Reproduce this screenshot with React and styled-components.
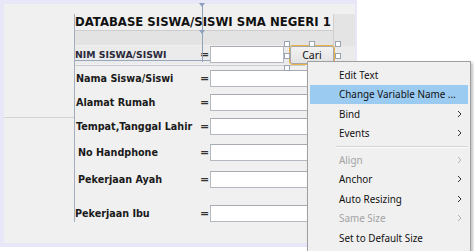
import React from 'react';
import styled, { createGlobalStyle } from 'styled-components';

const Global = createGlobalStyle`
  html, body {
    margin: 0;
    background: #ffffff;
    overflow: hidden;
  }
  body {
    width: 474px;
    height: 251px;
    position: relative;
  }
`;

const Canvas = styled.div`
  width: 357px;
  height: 247px;
  box-sizing: border-box;
  border: 4px solid #e7e7f8;
  border-right-width: 2px;
  background: #f0f0f0;
  display: grid;
  grid-template-columns: 70px 1fr;
`;

const LeftPane = styled.div`
  display: flex;
  flex-direction: column;
`;

const LeftTop = styled.div`
  height: 113px;
  border-bottom: 1px solid #d4d4d4;
`;

const Form = styled.div`
  margin-top: 10px;
  height: 208px;
  border-left: 1px solid #a4adbb;
  display: flex;
  flex-direction: column;
`;

const Title = styled.div`
  height: 16px;
  line-height: 16px;
  font-family: 'DejaVu Sans', sans-serif;
  font-weight: bold;
  font-size: 11.7px;
  color: #111;
  white-space: nowrap;
  display: flex;
`;

const TitleText = styled.span`
  flex: 0 0 258px;
`;

const SideBox = styled.div`
  flex: 1;
  background: #e4e4e4;
  border-left: 1px solid #cfcfcf;
  height: 48px;
`;

const HeaderBand = styled.div`
  height: 14px;
  width: 258px;
  background: #e3e3e3;
  border-top: 1px solid #cdcdcd;
`;

const Row = styled.div`
  height: 18px;
  margin-top: ${p => p.$gap}px;
  display: flex;
  align-items: center;
  background: ${p => (p.$active ? '#ebebeb' : 'transparent')};
`;

const Label = styled.div`
  width: 125px;
  box-sizing: border-box;
  padding-left: ${p => p.$indent || 0}px;
  font-family: 'DejaVu Sans Condensed', 'DejaVu Sans', sans-serif;
  font-weight: bold;
  font-size: 10.7px;
  color: #1a1a1a;
  white-space: nowrap;
`;

const SmallLabel = styled(Label)`
  font-family: 'DejaVu Sans', sans-serif;
  font-size: 9.3px;
  color: #2a2a3a;
`;

const Eq = styled.div`
  width: 10px;
  font-family: 'DejaVu Sans', sans-serif;
  font-weight: bold;
  font-size: 11px;
  color: #333;
`;

const Field = styled.div`
  width: ${p => p.$w}px;
  height: 17px;
  box-sizing: border-box;
  background: #ffffff;
  border: 1px solid #b4b8c0;
  border-top-color: #a8abb2;
`;

const CariButton = styled.div`
  margin-left: 6px;
  width: 44px;
  height: 18px;
  box-sizing: border-box;
  border: 1px solid #a9a9a9;
  border-radius: 2px;
  background: linear-gradient(#f2f2f2, #e3e3e3);
  outline: 1px solid #eab34a;
  font-family: 'Noto Sans', sans-serif;
  font-size: 10.5px;
  line-height: 16px;
  text-align: center;
  color: #111;
`;

const Handle = styled.div`
  position: absolute;
  left: ${p => p.$x - 2}px;
  top: ${p => p.$y - 2}px;
  width: 4px;
  height: 4px;
  background: #ffffff;
  border: 1px solid #9aa3b0;
`;

const GuideV = styled.div`
  position: absolute;
  left: 202px;
  top: 6px;
  width: 1px;
  height: 56px;
  background: #90a2ba;
`;

const GuideH = styled.div`
  position: absolute;
  left: 75px;
  top: ${p => p.$y}px;
  width: ${p => p.$w}px;
  height: 1px;
  background: ${p => p.$c};
`;

const Marker = styled.div`
  position: absolute;
  left: 199px;
  top: ${p => p.$y}px;
  width: 0;
  height: 0;
  border-left: 3px solid transparent;
  border-right: 3px solid transparent;
  border-top: 4px solid #8aa0bc;
`;

const Menu = styled.div`
  position: absolute;
  left: 307px;
  top: 61px;
  width: 164px;
  height: 200px;
  box-sizing: border-box;
  padding: 3px 2px;
  background: #f0f0f0;
  border: 1px solid #a0a0a0;
  box-shadow: 2px 2px 3px rgba(0, 0, 0, 0.25);
  font-family: 'Noto Sans', sans-serif;
  font-size: 9.9px;
`;

const Item = styled.div`
  height: 19.5px;
  display: flex;
  align-items: center;
  padding-left: 29px;
  padding-right: 6px;
  color: ${p => (p.$disabled ? '#a3a3a3' : '#111')};
  background: ${p => (p.$hover ? '#9bcbf1' : 'transparent')};
  white-space: nowrap;
`;

const ItemText = styled.span`
  flex: 1;
`;

const Separator = styled.div`
  height: 7px;
  display: flex;
  align-items: center;
  padding-left: 26px;

  &::after {
    content: '';
    flex: 1;
    height: 1px;
    background: #d6d6d6;
    border-bottom: 1px solid #fbfbfb;
  }
`;

const Chevron = ({ disabled }) => (
  <svg width="5" height="8" viewBox="0 0 5 8">
    <path d="M1 1 L4 4 L1 7" fill="none" stroke={disabled ? '#b0b0b0' : '#333'} strokeWidth="1" />
  </svg>
);

const rows = [
  { label: 'Nama Siswa/Siswi', gap: 6, indent: 1 },
  { label: 'Alamat Rumah', gap: 6, indent: 1 },
  { label: 'Tempat,Tanggal Lahir', gap: 6, indent: 1 },
  { label: 'No Handphone', gap: 8, indent: 3 },
  { label: 'Pekerjaan Ayah', gap: 9, indent: 3 },
  { label: 'Pekerjaan Ibu', gap: 16, indent: 0 },
];

const menu = [
  { text: 'Edit Text' },
  { text: 'Change Variable Name ...', hover: true },
  { text: 'Bind', sub: true },
  { text: 'Events', sub: true },
  { sep: true },
  { text: 'Align', sub: true, disabled: true },
  { text: 'Anchor', sub: true },
  { text: 'Auto Resizing', sub: true },
  { text: 'Same Size', sub: true, disabled: true },
  { text: 'Set to Default Size' },
];

const App = () => {
  return (
    <>
      <Global />
      <Canvas>
        <LeftPane>
          <LeftTop />
        </LeftPane>
        <Form>
          <Title>
            <TitleText>DATABASE SISWA/SISWI SMA NEGERI 1</TitleText>
            <SideBox />
          </Title>
          <HeaderBand />
          <Row $gap={1} $active>
            <SmallLabel>NIM SISWA/SISWI</SmallLabel>
            <Eq>=</Eq>
            <Field $w={74} />
            <CariButton>Cari</CariButton>
          </Row>
          {rows.map(r => (
            <Row key={r.label} $gap={r.gap}>
              <Label $indent={r.indent}>{r.label}</Label>
              <Eq>=</Eq>
              <Field $w={140} />
            </Row>
          ))}
        </Form>
      </Canvas>

      <GuideV />
      <Marker $y={3} />
      <Marker $y={30} />
      <GuideH $y={60} $w={135} $c="#95a6bd" />
      <GuideH $y={65} $w={230} $c="#c9ccd2" />

      <Handle $x={286} $y={43} />
      <Handle $x={311} $y={43} />
      <Handle $x={337} $y={43} />
      <Handle $x={286} $y={55} />
      <Handle $x={337} $y={55} />
      <Handle $x={286} $y={67} />

      <Menu>
        {menu.map((m, i) =>
          m.sep ? (
            <Separator key={i} />
          ) : (
            <Item key={i} $hover={m.hover} $disabled={m.disabled}>
              <ItemText>{m.text}</ItemText>
              {m.sub && <Chevron disabled={m.disabled} />}
            </Item>
          )
        )}
      </Menu>
    </>
  );
};

export default App;
